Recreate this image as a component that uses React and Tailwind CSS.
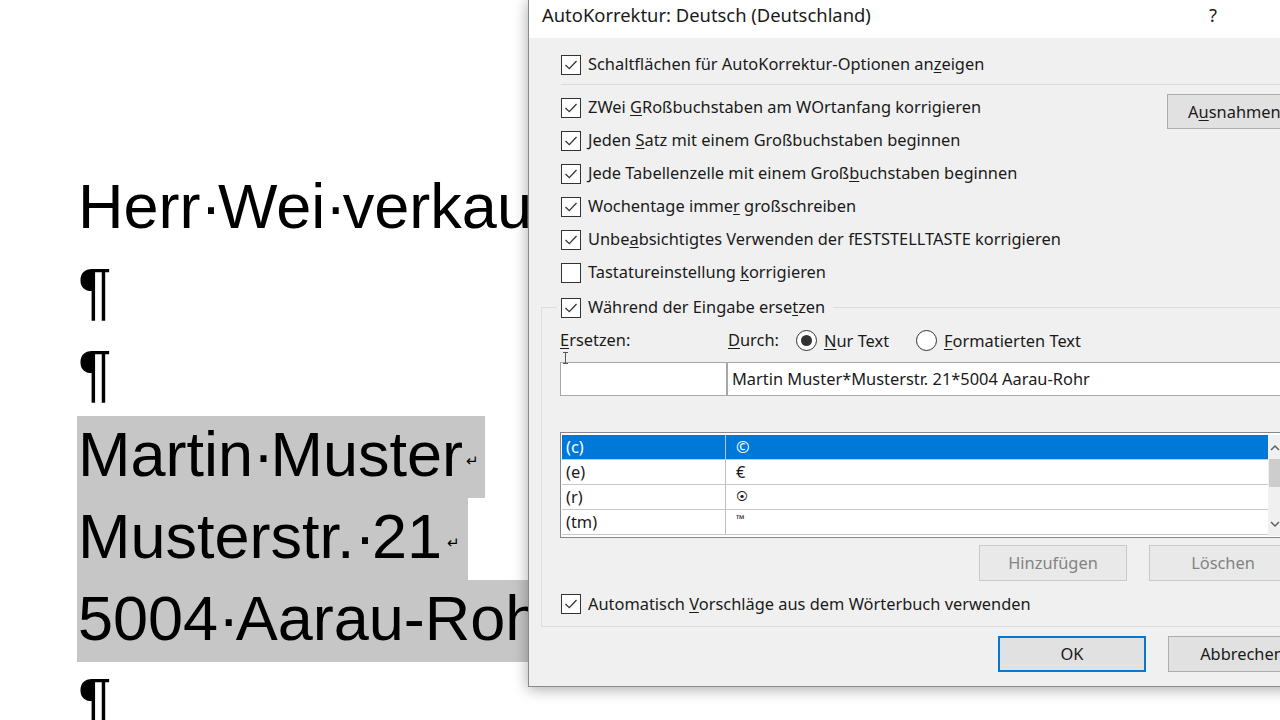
import React from "react";

function Check({ checked }) {
  return (
    <span className="w-[20px] h-[20px] border border-[#333333] bg-white flex items-center justify-center shrink-0">
      {checked && (
        <svg width="18" height="18" viewBox="0 0 18 18">
          <path d="M3.5 9 L7.3 12.6 L14.5 5" fill="none" stroke="#333333" strokeWidth="1.3" />
        </svg>
      )}
    </span>
  );
}

function Row({ checked = true, children }) {
  return (
    <div className="h-[33px] flex items-center">
      <Check checked={checked} />
      <span className="ml-[7px] whitespace-nowrap">{children}</span>
    </div>
  );
}

function Radio({ on }) {
  return (
    <span className="w-[21px] h-[21px] rounded-full border border-[#333333] bg-white flex items-center justify-center shrink-0">
      {on && <span className="w-[11px] h-[11px] rounded-full bg-[#333333]" />}
    </span>
  );
}

function Btn({ children, disabled, primary, w = "w-[148px]" }) {
  return (
    <div
      className={
        "h-[36px] shrink-0 flex items-center justify-center whitespace-nowrap " +
        w +
        " " +
        (primary
          ? "border-2 border-[#0078d7] bg-[#e1e1e1] text-[#1a1a1a]"
          : disabled
          ? "border border-[#c9c9c9] bg-[#e9e9e9] text-[#838383]"
          : "border border-[#adadad] bg-[#e1e1e1] text-[#1a1a1a]")
      }
    >
      {children}
    </div>
  );
}

function Dot() {
  return <span className="tracking-[-3.5px]">·</span>;
}

function Document() {
  const doc = "font-['Liberation_Sans',Arial,sans-serif] text-[63px] text-black whitespace-nowrap";
  return (
    <div className={"pt-[168px] pl-[77px] " + doc}>
      <div className="h-[84px] leading-[76px] pl-[1px]">
        Herr<Dot />Wei<Dot />verkauft
      </div>
      <div className="h-[82px] leading-[76px] pl-[1px]">¶</div>
      <div className="h-[82px] leading-[76px] pl-[1px]">¶</div>
      <div className="h-[82px] leading-[76px] pl-[1px] w-[408px] bg-[#c6c6c6]">
        Martin<Dot />Muster<span className="text-[15px] ml-[3px] align-[10px]">↵</span>
      </div>
      <div className="h-[82px] leading-[76px] pl-[1px] w-[391px] bg-[#c6c6c6]">
        Musterstr.<Dot />21<span className="text-[15px] ml-[5px] align-[10px]">↵</span>
      </div>
      <div className="h-[82px] leading-[76px] pl-[1px] w-[520px] bg-[#c6c6c6]">
        5004<Dot />Aarau-Rohr
      </div>
      <div className="h-[82px] leading-[76px] pl-[1px]">¶</div>
    </div>
  );
}

const rows = [
  ["(c)", "©"],
  ["(e)", "€"],
  ["(r)", "⦿"],
  ["(tm)", "™"],
];

export default function App() {
  return (
    <div className="relative w-[1280px] h-[720px] overflow-hidden bg-white">
      <Document />

      <div className="absolute left-[528px] top-[-1px] w-[800px] border border-[#8a8a8a] bg-[#f0f0f0] shadow-[0_2px_14px_rgba(0,0,0,0.35)] font-['Noto_Sans','Open_Sans',sans-serif] text-[16.4px] text-[#1a1a1a]">
        {/* title bar */}
        <div className="h-[38px] bg-white flex items-center pl-[13px] pb-[9px] text-[18.4px] text-[#1a1a1a]">
          <span>AutoKorrektur: Deutsch (Deutschland)</span>
          <span className="ml-auto mr-[110px]">?</span>
        </div>

        {/* body */}
        <div className="pt-[10px] pb-[14px]">
          <div className="pl-[32px]">
            <Row>
              Schaltflächen für AutoKorrektur-Optionen an<u className="underline-offset-2">z</u>eigen
            </Row>
          </div>
          <div className="mt-[3px] ml-[32px] h-px bg-[#dadada]" />
          <div className="mt-[6px] pl-[32px] flex">
            <div className="w-[606px] shrink-0">
              <Row>
                ZWei <u className="underline-offset-2">G</u>Roßbuchstaben am WOrtanfang korrigieren
              </Row>
              <Row>
                Jeden <u className="underline-offset-2">S</u>atz mit einem Großbuchstaben beginnen
              </Row>
              <Row>
                Jede Tabellenzelle mit einem Groß<u className="underline-offset-2">b</u>uchstaben beginnen
              </Row>
              <Row>
                Wochentage imme<u className="underline-offset-2">r</u> großschreiben
              </Row>
              <Row>
                Unbe<u className="underline-offset-2">a</u>bsichtigtes Verwenden der fESTSTELLTASTE korrigieren
              </Row>
              <Row checked={false}>
                Tastatureinstellung <u className="underline-offset-2">k</u>orrigieren
              </Row>
            </div>
            <div className="mt-[3px]">
              <div className="h-[35px] w-[148px] border border-[#adadad] bg-[#e1e1e1] flex items-center justify-center whitespace-nowrap pt-[2px]">
                <span>
                  A<u className="underline-offset-2">u</u>snahmen...
                </span>
              </div>
            </div>
          </div>

          {/* group */}
          <div className="relative mt-[18px] ml-[12px] border-t border-l border-b border-[#dcdcdc] pb-[9px]">
            <div className="-mt-[17px] pl-[15px] flex">
              <div className="bg-[#f0f0f0] pl-[4px] pr-[8px]">
                <Row>
                  Während der Eingabe erse<u className="underline-offset-2">t</u>zen
                </Row>
              </div>
            </div>

            <div className="mt-[3px] h-[26px] pl-[18px] flex items-center">
              <span className="w-[168px] shrink-0">
                <u className="underline-offset-2">E</u>rsetzen:
              </span>
              <span className="w-[68px] shrink-0">
                <u className="underline-offset-2">D</u>urch:
              </span>
              <Radio on />
              <span className="ml-[7px] w-[92px] shrink-0 pt-[3px]">
                <u className="underline-offset-2">N</u>ur Text
              </span>
              <Radio />
              <span className="ml-[7px] pt-[3px]">
                <u className="underline-offset-2">F</u>ormatierten Text
              </span>
            </div>

            {/* I-beam cursor */}
            <svg className="absolute left-[20px] top-[44px]" width="7" height="12" viewBox="0 0 7 12">
              <path d="M1 0.5 H6 M3.5 0.5 V11.5 M1 11.5 H6" stroke="#555" strokeWidth="1" fill="none" />
            </svg>

            <div className="mt-[9px] h-[34px] pl-[18px] flex">
              <div className="w-[167px] h-full shrink-0 border border-[#a8a8a8] bg-white" />
              <div className="w-[570px] h-full shrink-0 border border-[#a8a8a8] bg-white flex items-center pl-[4px] whitespace-nowrap">
                Martin Muster*Musterstr. 21*5004 Aarau-Rohr
              </div>
            </div>

            {/* table */}
            <div className="mt-[36px] ml-[18px] w-[727px] border border-[#828790] bg-white pt-[2px] pb-[1px] pl-px flex">
              <div className="w-[706px] shrink-0">
                {rows.map((r, i) => (
                  <div
                    key={i}
                    className={
                      "flex " +
                      (i === 0
                        ? "h-[24px] bg-[#0078d7] text-white"
                        : "h-[25px] border-t border-[#c8c8c8] text-[#1a1a1a]")
                    }
                  >
                    <div className="w-[164px] shrink-0 pl-[4px] flex items-center border-r border-[#c0c0c0]">
                      {r[0]}
                    </div>
                    <div className={"pl-[10px] flex items-center " + (i === 2 ? "text-[12px]" : i === 3 ? "text-[11px] -mt-[5px]" : "")}>
                      {r[1]}
                    </div>
                  </div>
                ))}
                <div className="border-t border-[#c8c8c8] h-[2px]" />
              </div>
              <div className="w-[17px] shrink-0 bg-[#f0f0f0] flex flex-col items-center">
                <svg width="12" height="24" viewBox="0 0 12 24" className="ml-[-4px]">
                  <path d="M2 15 L6 11 L10 15" fill="none" stroke="#606060" strokeWidth="1.5" />
                </svg>
                <div className="w-[13px] h-[28px] bg-[#cdcdcd] ml-[-3px]" />
                <div className="flex-1" />
                <svg width="12" height="20" viewBox="0 0 12 20" className="ml-[-4px]">
                  <path d="M2 6 L6 10 L10 6" fill="none" stroke="#606060" strokeWidth="1.5" />
                </svg>
              </div>
            </div>

            <div className="mt-[7px] pl-[437px] flex gap-[22px]">
              <Btn disabled>Hinzufügen</Btn>
              <Btn disabled>Löschen</Btn>
            </div>

            <div className="mt-[10px] h-[26px] pl-[19px] flex items-center">
              <Check checked />
              <span className="ml-[7px] whitespace-nowrap">
                Automatisch <u className="underline-offset-2">V</u>orschläge aus dem Wörterbuch verwenden
              </span>
            </div>
          </div>

          <div className="mt-[9px] pl-[469px] flex gap-[22px]">
            <Btn primary w="w-[148px]">OK</Btn>
            <Btn w="w-[148px]">Abbrechen</Btn>
          </div>
        </div>
      </div>
    </div>
  );
}
